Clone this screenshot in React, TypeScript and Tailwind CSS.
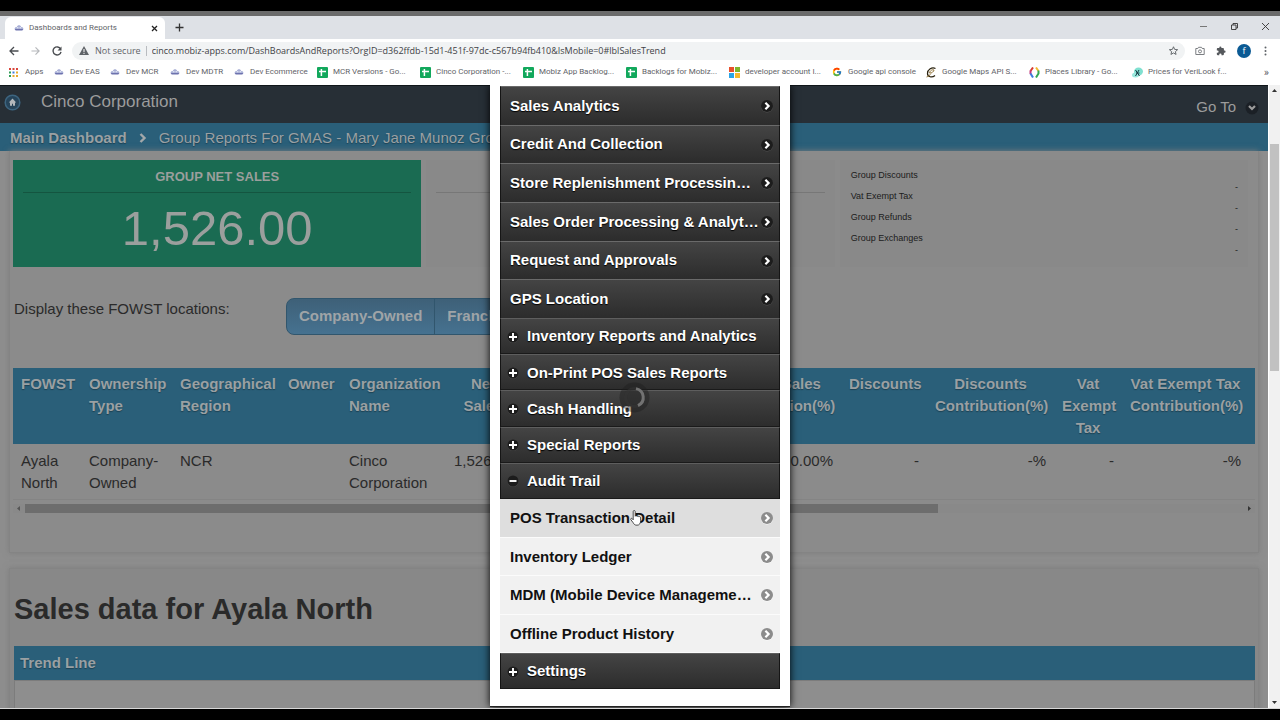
import React from "react";
import { FcGoogle } from "react-icons/fc";

type IconProps = { className?: string };

const CloudIcon = ({ className = "" }: IconProps) => (
    <svg className={className} width="10" height="10" viewBox="0 0 18 18">
        <path d="M1 11c0-3 2-4 4-4 1-4 7-4 8 0 2 0 4 1 4 4z" fill="#a9b0d6" />
        <path d="M5 7.5h3v2H5zM10 7.5h3v2h-3z" fill="#eef0fb" />
        <path d="M1 11h16l-2 2.500H3z" fill="#6d72ae" />
    </svg>
);

const AppsIcon = () => (
    <svg width="9" height="9" viewBox="0 0 9 9">
        <path d="M0 0h2v2H0zM3.5 0h2v2h-2zM7 0h2v2H7z" fill="#d9453b" />
        <path d="M0 3.5h2v2H0z" fill="#2f9e56" />
        <path d="M3.5 3.5h2v2h-2z" fill="#3f7de0" />
        <path d="M7 3.5h2v2H7z" fill="#e8a92b" />
        <path d="M0 7h2v2H0z" fill="#2f9e56" />
        <path d="M3.5 7h2v2h-2zM7 7h2v2H7z" fill="#e8a92b" />
    </svg>
);

const SheetIcon = () => (
    <svg width="11" height="11" viewBox="0 0 11 11">
        <rect width="11" height="11" rx="1" fill="#12a85c" />
        <path d="M4.4 2v7M2 4.4h7" stroke="#fff" strokeWidth="1.5" />
    </svg>
);

const WindowsIcon = () => (
    <svg width="11" height="11" viewBox="0 0 11 11">
        <path d="M0 0h5v5H0z" fill="#e8502c" />
        <path d="M6 0h5v5H6z" fill="#7fb62c" />
        <path d="M0 6h5v5H0z" fill="#2ba5e6" />
        <path d="M6 6h5v5H6z" fill="#f7b92c" />
    </svg>
);

const MapsIcon = () => (
    <svg width="11" height="11" viewBox="0 0 22 22" fill="none">
        <path d="M19 3C12-1 3 5 3 13c0 7 9 9 15 4" stroke="#2b2310" strokeWidth="2.500" />
        <path d="M7 12c5 0 9-3 9-6-3-2-9 2-9 6zM1 20c4-1 7-4 9-7" stroke="#8a6a2a" strokeWidth="1.800" />
    </svg>
);

const PlacesIcon = () => (
    <svg width="11" height="11" viewBox="0 0 22 22" fill="none" strokeWidth="4">
        <path d="M8 1 3 8" stroke="#d8392e" />
        <path d="M3 7v7" stroke="#c23a7c" />
        <path d="m3 13 5 8" stroke="#3c7be0" />
        <path d="m14 1 5 7" stroke="#f1b92f" />
        <path d="M19 7v6l-5 8" stroke="#34a853" />
    </svg>
);

const PricesIcon = () => (
    <svg width="11" height="11" viewBox="0 0 22 22">
        <ellipse cx="13" cy="9" rx="9" ry="8" fill="#7fe0d0" />
        <ellipse cx="7" cy="16" rx="7" ry="5" fill="#9be9de" />
        <path d="m7 6 8 12M14 6 7 18M8 12h7" stroke="#173b45" strokeWidth="2" />
    </svg>
);

const bookmarks = [
    { label: "Apps", icon: <AppsIcon />, width: "w-[45px]" },
    { label: "Dev EAS", icon: <CloudIcon />, width: "w-[56px]" },
    { label: "Dev MCR", icon: <CloudIcon />, width: "w-[60px]" },
    { label: "Dev MDTR", icon: <CloudIcon />, width: "w-[64px]" },
    { label: "Dev Ecommerce", icon: <CloudIcon />, width: "w-[83px]" },
    { label: "MCR Versions - Go...", icon: <SheetIcon />, width: "w-[103px]" },
    { label: "Cinco Corporation -...", icon: <SheetIcon />, width: "w-[103px]" },
    { label: "Mobiz App Backlog...", icon: <SheetIcon />, width: "w-[103px]" },
    { label: "Backlogs for Mobiz...", icon: <SheetIcon />, width: "w-[103px]" },
    { label: "developer account I...", icon: <WindowsIcon />, width: "w-[103px]" },
    { label: "Google api console", icon: <FcGoogle size={10} />, width: "w-[94px]" },
    { label: "Google Maps API S...", icon: <MapsIcon />, width: "w-[103px]" },
    { label: "Places Library - Go...", icon: <PlacesIcon />, width: "w-[103px]" },
    { label: "Prices for VeriLook f...", icon: <PricesIcon />, width: "w-[103px]" },
];

const linkItems = [
    "Sales Analytics",
    "Credit And Collection",
    "Store Replenishment Processin…",
    "Sales Order Processing & Analyt…",
    "Request and Approvals",
    "GPS Location",
];

const groups = [
    { label: "Inventory Reports and Analytics", open: false },
    { label: "On-Print POS Sales Reports", open: false },
    { label: "Cash Handling", open: false },
    { label: "Special Reports", open: false },
    { label: "Audit Trail", open: true },
];

const auditItems = [
    "POS Transaction Detail",
    "Inventory Ledger",
    "MDM (Mobile Device Manageme…",
    "Offline Product History",
];

const columns = [
    { label: "FOWST", value: "Ayala North", col: "w-[68px]", align: "text-left" },
    { label: "Ownership Type", value: "Company-Owned", col: "w-[91px]", align: "text-left" },
    { label: "Geographical Region", value: "NCR", col: "w-[108px]", align: "text-left" },
    { label: "Owner", value: "", col: "w-[61px]", align: "text-left" },
    { label: "Organization Name", value: "Cinco Corporation", col: "w-[105px]", align: "text-left" },
    { label: "Net Sales", value: "1,526.00", col: "w-[74px]", align: "text-right" },
    { label: "", value: "", col: "w-[194px]", align: "text-right" },
    { label: "Gross Sales Contribution(%)", value: "100.00%", col: "w-[127px]", align: "text-right" },
    { label: "Discounts", value: "-", col: "w-[86px]", align: "text-right" },
    { label: "Discounts Contribution(%)", value: "-%", col: "w-[127px]", align: "text-right" },
    { label: "Vat Exempt Tax", value: "-", col: "w-[68px]", align: "text-right" },
    { label: "Vat Exempt Tax Contribution(%)", value: "-%", col: "w-[127px]", align: "text-right" },
];

const summary = ["Group Discounts", "Vat Exempt Tax", "Group Refunds", "Group Exchanges"];

const ArrowBadge = ({ light = false }: { light?: boolean }) => (
    <svg className="shrink-0" width="14" height="14" viewBox="0 0 14 14">
        <circle cx="7" cy="7.5" r="6" fill={light ? "#fff" : "#555"} />
        <circle cx="7" cy="7" r="6" fill={light ? "#8c8c8c" : "#1c1c1c"} />
        <path d="m5.4 3.8 3.2 3.2-3.2 3.2" stroke="#fff" strokeWidth="2.200" fill="none" />
    </svg>
);

const ToggleBadge = ({ open }: { open: boolean }) => (
    <svg className="shrink-0" width="12" height="12" viewBox="0 0 12 12">
        <circle cx="6" cy="6.5" r="5.5" fill="#4a4a4a" />
        <circle cx="6" cy="6" r="5.5" fill="#1c1c1c" />
        <path d={open ? "M2.5 6h7" : "M2 6h8M6 2v8"} stroke="#fff" strokeWidth="1.9" />
    </svg>
);

const GroupButton = ({ label, open }: { label: string; open: boolean }) => (
    <button
        type="button"
        aria-expanded={open}
        className="flex w-full flex-1 items-center gap-2 border-x border-t border-x-[#151515] border-t-[#5e5e5e] bg-linear-to-b from-[#444] to-[#2c2c2c] px-[6px] text-left font-bold text-white shadow-[inset_0_-1px_0_#1a1a1a] [text-shadow:0_1px_1px_#000]"
    >
        <ToggleBadge open={open} />
        {label}
    </button>
);

const BrowserChrome = () => (
    <header className="shrink-0 bg-white font-['Open_Sans',sans-serif] text-[#5f6368]">
        <div className="flex h-[23px] items-end bg-[#dee1e6]">
            <div className="ml-[5px] flex h-[22px] w-[160px] items-center rounded-t-md bg-white pr-[7px] pl-[9px]">
                <CloudIcon />
                <span className="ml-[5px] flex-1 font-['Roboto',sans-serif] text-[8px] leading-3 whitespace-nowrap">Dashboards and Reports</span>
                <button type="button" aria-label="Close tab">
                    <svg width="7" height="7" viewBox="0 0 7 7"><path d="m1 1 5 5M6 1 1 6" stroke="#222" strokeWidth="1.3" /></svg>
                </button>
            </div>
            <button type="button" aria-label="New tab" className="mb-[7px] ml-[10px]">
                <svg width="9" height="9" viewBox="0 0 9 9"><path d="M4.5 .5v8M.5 4.5h8" stroke="#333" strokeWidth="1.3" /></svg>
            </button>
            <div className="mb-[9px] ml-auto flex items-center gap-6 pr-[11px]">
                <button type="button" aria-label="Minimize">
                    <svg width="7" height="7" viewBox="0 0 7 7"><path d="M0 3.5h7" stroke="#777" strokeWidth="1" /></svg>
                </button>
                <button type="button" aria-label="Restore">
                    <svg width="7" height="7" viewBox="0 0 7 7" fill="none" stroke="#333" strokeWidth=".9"><path d="M.5 2h4.5v4.500H.5zM2 2V.5h4.500V5H5" /></svg>
                </button>
                <button type="button" aria-label="Close window">
                    <svg width="7" height="7" viewBox="0 0 7 7"><path d="m0 0 7 7M7 0 0 7" stroke="#333" strokeWidth=".9" /></svg>
                </button>
            </div>
        </div>

        <div className="flex h-[23px] items-center pr-[11px] pl-[9px]">
            <div className="flex w-[63px] items-center gap-3">
                <button type="button" aria-label="Back">
                    <svg width="10" height="10" viewBox="0 0 10 10" fill="none" stroke="#4a4d51" strokeWidth="1.3"><path d="M9.500 5H1.200M5 1 1 5l4 4" /></svg>
                </button>
                <button type="button" aria-label="Forward">
                    <svg width="9" height="10" viewBox="0 0 10 10" fill="none" stroke="#b6b8bb" strokeWidth="1.3"><path d="M.5 5h8.300M5 1l4 4-4 4" /></svg>
                </button>
                <button type="button" aria-label="Reload">
                    <svg width="10" height="10" viewBox="0 0 10 10" fill="none"><path d="M8.600 3A4 4 0 1 0 9 5.800" stroke="#4a4d51" strokeWidth="1.4" /><path d="M9.500.500v4h-4z" fill="#4a4d51" /></svg>
                </button>
            </div>
            <div className="flex h-[18px] flex-1 items-center rounded-full bg-[#f1f3f4] pr-[7px] pl-[7px] text-[9px]">
                <svg width="10" height="9" viewBox="0 0 10 9"><path d="M5 0 10 9H0z" fill="#5f6368" /><path d="M5 3v3M5 6.800v1.200" stroke="#fff" strokeWidth="1" /></svg>
                <label htmlFor="address" className="ml-[6px] whitespace-nowrap">Not secure</label>
                <span className="mx-[5px] h-[10px] w-px bg-[#b9bcc0]" />
                <input
                    id="address"
                    readOnly
                    className="min-w-0 flex-1 bg-transparent text-[#3f4246] outline-none"
                    value="cinco.mobiz-apps.com/DashBoardsAndReports?OrgID=d362ffdb-15d1-451f-97dc-c567b94fb410&IsMobile=0#lblSalesTrend"
                />
                <svg width="9" height="9" viewBox="0 0 24 24" fill="none" stroke="#5f6368" strokeWidth="2.500"><path d="m12 2 3 7 8 .8-6 5.200 1.800 7.500L12 18.500 5.200 22.500 7 15 1 9.800 9 9z" /></svg>
            </div>
            <div className="ml-[10px] flex items-center gap-[11px]">
                <svg width="10" height="10" viewBox="0 0 10 10" fill="none" stroke="#7b7e82"><path d="M.8 2.500h2L3.500 1.300h3l.7 1.200h2v6H.8z" /><circle cx="5" cy="5.400" r="1.500" /></svg>
                <svg width="10" height="10" viewBox="0 0 24 24" fill="#55585c"><path d="M20.500 11H19V7a2 2 0 0 0-2-2h-4V3.500a2.500 2.500 0 0 0-5 0V5H4a2 2 0 0 0-2 2v3.800h1.500a2.700 2.700 0 0 1 0 5.400H2V20a2 2 0 0 0 2 2h3.800v-1.500a2.700 2.700 0 0 1 5.400 0V22H17a2 2 0 0 0 2-2v-4h1.500a2.500 2.500 0 0 0 0-5" /></svg>
                <button type="button" className="flex h-[14px] w-[14px] items-center justify-center rounded-full bg-[#0b5a94] text-[9px] leading-none text-white">f</button>
                <svg width="7" height="10" viewBox="0 0 7 10" fill="#5f6368"><circle cx="3.500" cy="1.500" r="1" /><circle cx="3.500" cy="5" r="1" /><circle cx="3.500" cy="8.500" r="1" /></svg>
            </div>
        </div>

        <nav className="flex h-[23px] items-center pr-[11px] pb-[3px] pl-[9px] font-['Roboto',sans-serif] text-[8px] whitespace-nowrap">
            {bookmarks.map(b => (
                <a key={b.label} href="#" className={`flex shrink-0 items-center ${b.width}`}>
                    <span className="flex w-4 shrink-0 items-center">{b.icon}</span>
                    {b.label}
                </a>
            ))}
            <span className="ml-auto text-[11px] leading-none">»</span>
        </nav>
    </header>
);

const Dashboard = () => (
    <div className="min-w-0 flex-1 overflow-hidden bg-[#8e8e8e] text-[#2a2a2a]">
        <div className="flex h-[38px] items-center border-t border-[#10161a] bg-[#272f36] pr-[8px] pl-[4px] text-[#9c9c9c]">
            <a href="#" aria-label="Home" className="mb-[5px]">
                <svg width="17" height="17" viewBox="0 0 17 17">
                    <circle cx="8.500" cy="8.500" r="7.300" fill="#26445a" stroke="#3d6580" strokeWidth="1.500" />
                    <path d="M8.500 4.500 4.800 8.500h1.200v3.300h2v-2h1v2h2V8.500h1.200z" fill="#b3b8bc" />
                </svg>
            </a>
            <h1 className="mb-[5px] ml-5 text-[17px]">Cinco Corporation</h1>
            <button type="button" className="mt-[6px] ml-auto flex items-center gap-2 text-[15px]">
                Go To
                <svg width="16" height="16" viewBox="0 0 16 16">
                    <circle cx="8" cy="8" r="6.500" fill="#1b2026" />
                    <path d="m5 6 3 3 3-3" fill="none" stroke="#9c9c9c" strokeWidth="2.200" />
                </svg>
            </button>
        </div>

        <nav className="flex h-[28px] items-center bg-[#2a5f79] pt-[2px] pl-[10px] text-[15px] whitespace-nowrap text-[#9aa0a3] [text-shadow:0_1px_1px_#1d4254]">
            <a href="#" className="font-bold">Main Dashboard</a>
            <svg className="mx-3" width="8" height="10" viewBox="0 0 8 10"><path d="m1.500 1 4 4-4 4" stroke="#a3a8aa" strokeWidth="2.400" fill="none" /></svg>
            <a href="#">Group Reports For GMAS - Mary Jane Munoz Group</a>
        </nav>

        <section className="mx-[9px] h-[402px] border-x border-b border-[#848484] bg-[#8b8b8b] pr-[3px] pl-[3px] shadow-[0_0_6px_#7d7d7d]">
            <div className="grid grid-cols-3 gap-[5px] pt-[9px] pr-[7px]">
                <div className="h-[107px] bg-[#1a6b52] px-[10px] text-center text-[#9b9f9d]">
                    <h2 className="border-b border-[#145540] pt-[7px] pb-[5px] text-[13px] leading-5 font-bold">GROUP NET SALES</h2>
                    <p className="pt-[5px] text-[49px] leading-[60px]">1,526.00</p>
                </div>
                <div className="h-[107px] bg-[#898989] px-[10px]">
                    <div className="h-[33px] border-b border-[#777]" />
                </div>
                <dl className="h-[107px] bg-[#898989] pt-[5px] pr-[10px] pl-[11px] text-[9px] text-[#1c1c1c]">
                    {summary.map(label => (
                        <div key={label} className="flex h-[21px] justify-between">
                            <dt className="leading-5">{label}</dt>
                            <dd className="pt-3 leading-5">-</dd>
                        </div>
                    ))}
                </dl>
            </div>

            <div className="flex pt-[31px] text-[15px]">
                <span id="locations" className="w-[273px] pl-px leading-[22px]">Display these FOWST locations:</span>
                <div role="group" aria-labelledby="locations" className="flex h-[37px] overflow-hidden rounded-lg border border-[#31566d] bg-linear-to-b from-[#3e6078] to-[#467290] font-bold text-[#9fa4a7] [text-shadow:0_1px_1px_#26404f]">
                    <button type="button" className="border-r border-[#31566d] px-3">Company-Owned</button>
                    <button type="button" className="border-r border-[#31566d] px-3">Franchised</button>
                </div>
            </div>

            <table className="mt-[33px] w-full table-fixed text-[15px] leading-[22px]">
                <colgroup>
                    {columns.map((c, i) => <col key={i} className={c.col} />)}
                    <col />
                </colgroup>
                <thead>
                    <tr className="bg-[#2a5f79] align-top text-[#9aa0a3] [text-shadow:0_1px_1px_#1d4254]">
                        {columns.map((c, i) => (
                            <th key={i} className={c.align === "text-left" ? "px-2 py-[5px] text-left" : "px-2 py-[5px] text-center"}>{c.label}</th>
                        ))}
                        <td />
                    </tr>
                </thead>
                <tbody>
                    <tr className="border-b border-[#848484] align-top">
                        {columns.map((c, i) => (
                            <td key={i} className={`px-2 pt-[6px] pb-[5px] ${c.align}`}>{c.value}</td>
                        ))}
                        <td />
                    </tr>
                </tbody>
            </table>
            <div className="mt-[4px] flex h-[9px] items-center bg-[#898989] pr-[4px] pl-[4px]">
                <svg width="3" height="5" viewBox="0 0 3 5"><path d="M3 0v5L0 2.500z" fill="#555" /></svg>
                <div className="ml-[5px] h-full w-[74%] bg-[#6d6d6d]" />
                <svg className="ml-auto" width="3" height="5" viewBox="0 0 3 5"><path d="M0 0v5l3-2.500z" fill="#333" /></svg>
            </div>
        </section>

        <section className="mx-[9px] mt-[15px] border border-[#848484] bg-[#888] pr-[3px] pl-[4px] shadow-[0_0_6px_#7d7d7d]">
            <h2 className="pt-[22px] pb-[19px] text-[29px] leading-9 font-bold">Sales data for Ayala North</h2>
            <h3 className="h-[34px] bg-[#2a5f79] pl-[6px] text-[15px] leading-[34px] font-bold text-[#9aa0a3] [text-shadow:0_1px_1px_#1d4254]">Trend Line</h3>
            <div className="h-[60px] border border-[#7c7c7c] bg-[#8e8e8e]" />
        </section>
    </div>
);

const MenuPopup = () => (
    <div className="relative h-[622px] w-[300px] border-b border-[#222] bg-white px-[10px] pt-px text-[15px] shadow-[0_0_8px_#000]">
        <ul className="flex h-[232px] flex-col">
            {linkItems.map(label => (
                <li key={label} className="flex flex-1">
                    <a
                        href="#"
                        className="flex flex-1 items-center justify-between border-x border-t border-x-[#151515] border-t-[#6a6a6a] bg-linear-to-b from-[#444] to-[#2c2c2c] pr-[5px] pl-[9px] font-bold whitespace-nowrap text-white [text-shadow:0_1px_1px_#000]"
                    >
                        {label}
                        <ArrowBadge />
                    </a>
                </li>
            ))}
        </ul>
        <div className="flex h-[181px] flex-col">
            {groups.map(g => <GroupButton key={g.label} label={g.label} open={g.open} />)}
        </div>
        <ul className="flex h-[154px] flex-col">
            {auditItems.map((label, i) => (
                <li key={label} className="flex flex-1">
                    <a
                        href="#"
                        className={`flex flex-1 items-center justify-between border-b border-[#fbfbfb] pt-px pr-[6px] pl-[10px] font-bold whitespace-nowrap text-[#111] ${i === 0 ? "bg-[#dedede]" : "bg-[#f1f1f1]"}`}
                    >
                        {label}
                        <ArrowBadge light />
                    </a>
                </li>
            ))}
        </ul>
        <div className="flex h-[36px]">
            <GroupButton label="Settings" open={false} />
        </div>

        {/* loading ring */}
        <svg className="absolute top-[297px] left-[129px]" width="31" height="31" viewBox="0 0 31 31" fill="none">
            <circle cx="15.500" cy="15.500" r="15" fill="#1f1f1f" fillOpacity=".45" />
            <circle cx="15.500" cy="15.500" r="9" stroke="#333" strokeWidth="3" strokeOpacity=".6" />
            <path d="M17 6.600a9 9 0 0 1 2 17" stroke="#727272" strokeWidth="3" />
        </svg>
        {/* pointer */}
        <svg className="absolute top-[425px] left-[140px]" width="12" height="16" viewBox="0 0 12 16">
            <path d="M3.200 1.500c0-1.300 2-1.300 2 0v4.700c.3-.8 1.800-.7 1.900.3.400-.8 1.700-.5 1.800.4.500-.6 1.700-.2 1.700.8v3c0 2.500-1 4.500-3.600 4.500-2.300 0-3-1-4-2.700L.8 9.600c-.5-1 .8-1.800 1.500-.9l.9 1.100z" fill="#fff" stroke="#222" strokeWidth=".8" />
        </svg>
    </div>
);

export default function App() {
    return (
        <div className="flex h-screen flex-col overflow-hidden border-t-[11px] border-b-[11px] border-black bg-white">
            <div className="h-[5px] shrink-0 bg-[#6b6b6b]" />
            <BrowserChrome />
            <main className="relative flex min-h-0 flex-1 overflow-hidden border-b border-[#d8d8d8] font-['Liberation_Sans',Arial,sans-serif]">
                <Dashboard />
                <div className="flex w-3 flex-col items-center border-l border-white bg-[#f1f1f1] py-[4px]">
                    <svg width="5" height="3" viewBox="0 0 5 3"><path d="M0 3h5L2.500 0z" fill="#333" /></svg>
                    <div className="mt-[52px] h-[227px] w-[9px] bg-[#c1c1c1]" />
                    <svg className="mt-auto" width="5" height="3" viewBox="0 0 5 3"><path d="M0 0h5L2.500 3z" fill="#333" /></svg>
                </div>
                <div className="absolute inset-0 flex items-start justify-center">
                    <MenuPopup />
                </div>
            </main>
        </div>
    );
}
